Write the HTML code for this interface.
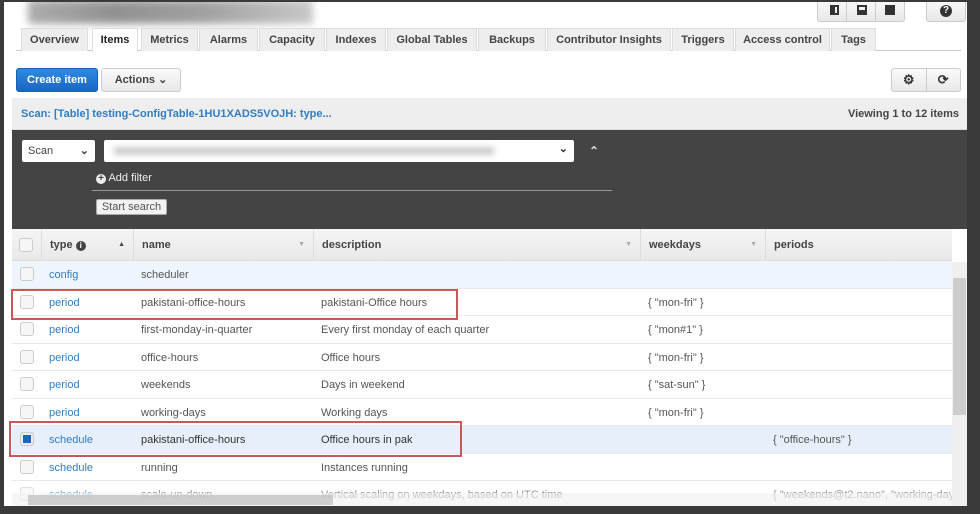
<!DOCTYPE html>
<html><head><style>
*{box-sizing:border-box;margin:0;padding:0}
body{width:980px;height:514px;overflow:hidden;background:#3a3a3a;font-family:"Liberation Sans",Arial,sans-serif;font-size:11px;position:relative}
.page{position:absolute;left:4px;top:2px;width:963px;height:504px;background:#fff;overflow:hidden}
.abs{position:absolute}
.blur{position:absolute;left:24px;top:-2px;width:285px;height:24px;background:linear-gradient(90deg,#999,#777 30%,#888 60%,#bbb);filter:blur(4px);opacity:.8}
.tabs{position:absolute;left:12px;top:26px;height:23px;width:945px;border-bottom:1px solid #ccc}
.tab{position:absolute;top:0;height:23px;background:#eee;border:1px solid #ddd;border-bottom:none;font-weight:bold;color:#444;font-size:11px;line-height:22px;text-align:center}
.tab.act{background:#fff;color:#222;height:24px}
.btn{position:absolute;border:1px solid #ccc;border-radius:3px;background:linear-gradient(#fafafa,#e8e8e8);font-weight:bold;color:#444;font-size:11px;text-align:center}
.dark{position:absolute;left:8px;top:128px;width:955px;height:99px;background:#444}
.hdr{position:absolute;left:8px;top:227px;width:940px;height:32px;background:linear-gradient(#f5f5f5,#e9e9e9);border-bottom:1px solid #ddd}
.hdr div{position:absolute;top:0;height:32px;line-height:32px;font-weight:bold;color:#444;font-size:11px;border-left:1px solid #ddd;padding-left:8px}
.hdr i{position:absolute;right:8px;font-style:normal;font-size:7px;color:#aaa}
.row{position:absolute;left:8px;width:940px;height:27.5px;border-bottom:1px solid #eaeaea;color:#555;font-size:11px;overflow:hidden}
.row span{position:absolute;top:8px;white-space:nowrap}
.cb{position:absolute;left:8px;top:6px;width:14px;height:14px;border:1px solid #ccc;border-radius:3px;background:#f6f6f6}
.lnk{color:#2f7ec2}
.red{position:absolute;border:2px solid #c9575b}
</style></head><body>
<div class="page">
<div class="blur"></div>
<div class="tabs">
<div class="tab" style="left:5px;width:67px">Overview</div>
<div class="tab act" style="left:76px;width:46px">Items</div>
<div class="tab" style="left:125px;width:57px">Metrics</div>
<div class="tab" style="left:183px;width:59px">Alarms</div>
<div class="tab" style="left:243px;width:66px">Capacity</div>
<div class="tab" style="left:310px;width:60px">Indexes</div>
<div class="tab" style="left:371px;width:90px">Global Tables</div>
<div class="tab" style="left:462px;width:68px">Backups</div>
<div class="tab" style="left:531px;width:124px">Contributor Insights</div>
<div class="tab" style="left:656px;width:62px">Triggers</div>
<div class="tab" style="left:719px;width:95px">Access control</div>
<div class="tab" style="left:815px;width:45px">Tags</div>
</div>
<div class="btn" style="left:813px;top:-3px;width:88px;height:23px;display:flex">
<div style="flex:1;border-right:1px solid #ccc;position:relative"><div style="position:absolute;left:12px;top:5px;width:9px;height:10px;border:2px solid #333;border-left-width:5px"></div></div>
<div style="flex:1;border-right:1px solid #ccc;position:relative"><div style="position:absolute;left:10px;top:5px;width:10px;height:10px;border:2px solid #333;border-bottom-width:5px"></div></div>
<div style="flex:1;position:relative"><div style="position:absolute;left:9px;top:5px;width:10px;height:10px;background:#333"></div></div>
</div>
<div class="btn" style="left:922px;top:-3px;width:40px;height:23px"><div style="margin:5px auto;width:12px;height:12px;border-radius:50%;background:#333;color:#fff;font-size:10px;line-height:12px">?</div></div>
<div class="btn" style="left:12px;top:66px;width:82px;height:24px;background:linear-gradient(#2e8be0,#1a66c2);border-color:#1a5fb0;color:#fff;line-height:22px">Create item</div>
<div class="btn" style="left:97px;top:66px;width:80px;height:24px;line-height:22px">Actions &#8964;</div>
<div class="btn" style="left:887px;top:66px;width:70px;height:24px;display:flex;font-size:13px;line-height:22px;color:#333"><div style="flex:1;border-right:1px solid #ccc">&#9881;</div><div style="flex:1">&#10227;</div></div>
<div class="abs" style="left:8px;top:96px;width:955px;height:32px;background:#eee;border-bottom:1px solid #ddd"></div>
<div class="abs" style="left:17px;top:106px;color:#2f7ec2;font-weight:bold;font-size:11px">Scan: [Table] testing-ConfigTable-1HU1XADS5VOJH: type...</div>
<div class="abs" style="right:8px;top:106px;color:#444;font-weight:bold;font-size:11px">Viewing 1 to 12 items</div>
<div class="dark">
<div class="abs" style="left:10px;top:10px;width:73px;height:22px;background:#fff;border-radius:2px;color:#444;font-size:11px;line-height:22px;padding-left:6px">Scan<span style="position:absolute;right:6px;font-weight:bold">&#8964;</span></div>
<div class="abs" style="left:92px;top:10px;width:470px;height:22px;background:#fff;border-radius:2px"><div style="position:absolute;left:10px;top:7px;width:380px;height:8px;background:#ccc;filter:blur(3px)"></div><span style="position:absolute;right:6px;top:2px;font-weight:bold;color:#333">&#8964;</span></div>
<div class="abs" style="left:577px;top:14px;color:#ddd;font-size:12px;font-weight:bold">&#8963;</div>
<div class="abs" style="left:84px;top:42px;color:#eee;font-size:11px"><span style="display:inline-block;width:10px;height:10px;border-radius:50%;background:#eee;color:#444;font-size:10px;line-height:10px;text-align:center;font-weight:bold">+</span> Add filter</div>
<div class="abs" style="left:80px;top:60px;width:520px;height:1px;background:#999"></div>
<div class="abs" style="left:84px;top:69px;width:71px;height:16px;background:#f2f2f2;border:1px solid #aaa;border-radius:2px;color:#555;font-size:11px;line-height:14px;text-align:center">Start search</div>
</div>
<div class="hdr">
<div style="left:0;width:28px;border-left:none"><span class="cb" style="top:9px;left:7px"></span></div>
<div style="left:29px;width:92px">type <span style="display:inline-block;width:10px;height:10px;border-radius:50%;background:#444;color:#fff;font-size:8px;line-height:10px;text-align:center">i</span><i style="color:#444">&#9650;</i></div>
<div style="left:121px;width:180px">name<i>&#9660;</i></div>
<div style="left:301px;width:327px">description<i>&#9660;</i></div>
<div style="left:628px;width:125px">weekdays<i>&#9660;</i></div>
<div style="left:753px;width:187px">periods</div>
</div>
<div class="row" style="top:259px;background:#eef5fc"><div class="cb"></div><span class="lnk" style="left:37px">config</span><span style="left:129px">scheduler</span></div>
<div class="row" style="top:286.5px"><div class="cb"></div><span class="lnk" style="left:37px">period</span><span style="left:129px">pakistani-office-hours</span><span style="left:309px">pakistani-Office hours</span><span style="left:636px">{ "mon-fri" }</span></div>
<div class="row" style="top:314px"><div class="cb"></div><span class="lnk" style="left:37px">period</span><span style="left:129px">first-monday-in-quarter</span><span style="left:309px">Every first monday of each quarter</span><span style="left:636px">{ "mon#1" }</span></div>
<div class="row" style="top:341.5px"><div class="cb"></div><span class="lnk" style="left:37px">period</span><span style="left:129px">office-hours</span><span style="left:309px">Office hours</span><span style="left:636px">{ "mon-fri" }</span></div>
<div class="row" style="top:369px"><div class="cb"></div><span class="lnk" style="left:37px">period</span><span style="left:129px">weekends</span><span style="left:309px">Days in weekend</span><span style="left:636px">{ "sat-sun" }</span></div>
<div class="row" style="top:396.5px"><div class="cb"></div><span class="lnk" style="left:37px">period</span><span style="left:129px">working-days</span><span style="left:309px">Working days</span><span style="left:636px">{ "mon-fri" }</span></div>
<div class="row" style="top:424px;background:#e6effa"><div class="cb" style="background:#1a66c2;border-color:#ccc;box-shadow:inset 0 0 0 2px #eee"></div><span class="lnk" style="left:37px">schedule</span><span style="left:129px;color:#333">pakistani-office-hours</span><span style="left:309px;color:#333">Office hours in pak</span><span style="left:761px">{ "office-hours" }</span></div>
<div class="row" style="top:451.5px"><div class="cb"></div><span class="lnk" style="left:37px">schedule</span><span style="left:129px">running</span><span style="left:309px">Instances running</span></div>
<div class="row" style="top:479px;opacity:.6"><div class="cb"></div><span class="lnk" style="left:37px">schedule</span><span style="left:129px">scale-up-down</span><span style="left:309px">Vertical scaling on weekdays, based on UTC time</span><span style="left:761px">{ "weekends@t2.nano", "working-days</span></div>
<div class="abs" style="left:8px;top:491px;width:940px;height:13px;background:rgba(240,240,240,.6)"></div>
<div class="abs" style="left:24px;top:493px;width:305px;height:10px;background:rgba(190,190,190,.7)"></div>
<div class="abs" style="left:948px;top:260px;width:15px;height:244px;background:#f0f0f0"></div>
<div class="abs" style="left:949px;top:276px;width:13px;height:137px;background:#cdcdcd"></div>
<div class="red" style="left:7px;top:287px;width:447px;height:31px"></div>
<div class="red" style="left:5px;top:419px;width:453px;height:36px"></div>
</div>
</body></html>
